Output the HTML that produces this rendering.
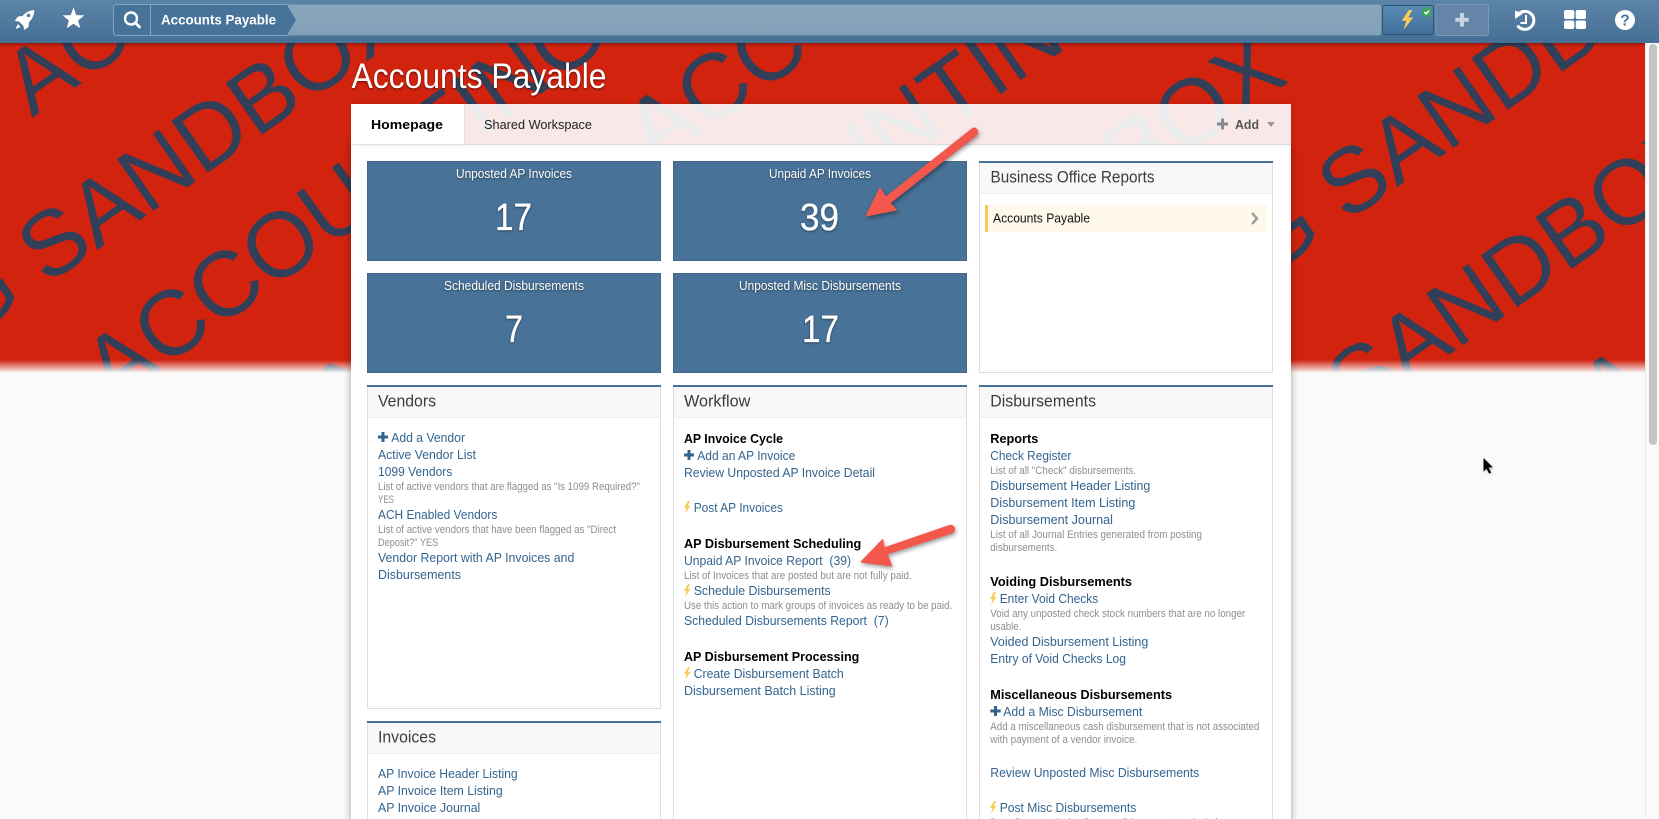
<!DOCTYPE html>
<html><head><meta charset="utf-8"><title>Accounts Payable</title>
<style>
html,body{margin:0;padding:0;width:1659px;height:819px;overflow:hidden;background:#fafafa}
svg{display:block;font-family:"Liberation Sans",Arial,sans-serif}
.wm{font-size:92px;fill:#323f58}
.l{font-size:13px;fill:#33648f}
.s{font-size:11px;fill:#8e8e8e}
.b{font-size:13px;font-weight:bold;fill:#000}
.h{font-size:17px;fill:#3c3c3c}
.st{font-size:13px;fill:#fff;filter:drop-shadow(0 1px 1px rgba(0,0,0,.45))}
.n{font-size:38px;fill:#fff;stroke:#fff;stroke-width:.35px;filter:drop-shadow(0 1px 1px rgba(0,0,0,.4))}
.card{fill:#487297;stroke:#3f688c;stroke-width:1}
.pn{fill:#fff;stroke:#ddd;stroke-width:1}
.ph{fill:#f8f8f8}
</style></head><body>
<svg width="1659" height="819" viewBox="0 0 1659 819" xmlns="http://www.w3.org/2000/svg">
<defs>
<linearGradient id="top" x1="0" y1="0" x2="0" y2="1"><stop offset="0" stop-color="#5c84a7"/><stop offset="1" stop-color="#456f94"/></linearGradient>
<linearGradient id="crumb" x1="0" y1="0" x2="0" y2="1"><stop offset="0" stop-color="#8ba6bc"/><stop offset="1" stop-color="#82a0b9"/></linearGradient>
<linearGradient id="fade" x1="0" y1="0" x2="0" y2="1"><stop offset="0" stop-color="#fafafa" stop-opacity="0"/><stop offset="1" stop-color="#fafafa"/></linearGradient>
<linearGradient id="sh" x1="0" y1="0" x2="0" y2="1"><stop offset="0" stop-color="#000" stop-opacity=".28"/><stop offset="1" stop-color="#000" stop-opacity="0"/></linearGradient>
<linearGradient id="btn" x1="0" y1="0" x2="0" y2="1"><stop offset="0" stop-color="#5a8cb6"/><stop offset="1" stop-color="#41709a"/></linearGradient>
<clipPath id="band"><rect x="0" y="43" width="1645" height="330"/></clipPath>
</defs>

<rect width="1659" height="819" fill="#fafafa"/>
<!-- red band with watermark -->
<g clip-path="url(#band)">
<rect x="0" y="43" width="1645" height="330" fill="#d2230f"/>
<text class="wm" transform="translate(32 118) rotate(-35)">ACCOUNTING SANDBOX</text>
<text class="wm" transform="translate(-481 655) rotate(-35)">ACCOUNTING SANDBOX ACCOUNTING</text>
<text class="wm" transform="translate(113 405) rotate(-36)">ACCOUNTING SANDBOX</text>
<text class="wm" transform="translate(352 425) rotate(-35)">N</text>
<text class="wm" transform="translate(654 167) rotate(-35)">ACCOUNTING</text>
<text class="wm" transform="translate(621 360) rotate(-35)">ACCOUNTING</text>
<text class="wm" transform="translate(922 339) rotate(-35)">SANDBOX</text>
<text class="wm" transform="translate(819 592) rotate(-35)">ACCOUNTING SANDBOX</text>
<text class="wm" transform="translate(1356 420) rotate(-35)">SANDBOX</text>
<text class="wm" transform="translate(1608 429) rotate(-35)">A</text>
<rect x="0" y="360" width="1645" height="13" fill="url(#fade)"/>
<rect x="0" y="43" width="1645" height="4" fill="url(#sh)"/>
</g>

<!-- scrollbar -->
<rect x="1645" y="43" width="14" height="776" fill="#fafafa"/>
<rect x="1645" y="43" width="1" height="776" fill="#e8e8e8"/>
<rect x="1649" y="44" width="8" height="401" rx="4" fill="#c4c4c4"/>

<!-- title -->
<text x="351.500" y="88" font-size="35" fill="#fff" textLength="255" lengthAdjust="spacingAndGlyphs" style="filter:drop-shadow(0 1px 1px rgba(0,0,0,.55))">Accounts Payable</text>

<!-- main panel -->
<rect x="351" y="144" width="940" height="700" fill="#fff" style="filter:drop-shadow(0 0 4px rgba(0,0,0,.35))"/>
<rect x="351" y="104" width="940" height="40" fill="#000" fill-opacity=".12" style="filter:blur(3px)"/>
<!-- watermark beneath the translucent tab bar -->
<svg x="351" y="104" width="940" height="40" viewBox="351 104 940 40">
<rect x="351" y="104" width="940" height="40" fill="#d2230f"/>
<text class="wm" transform="translate(-481 655) rotate(-35)">ACCOUNTING SANDBOX ACCOUNTING</text>
<text class="wm" transform="translate(113 405) rotate(-36)">ACCOUNTING SANDBOX</text>
<text class="wm" transform="translate(654 167) rotate(-35)">ACCOUNTING</text>
<text class="wm" transform="translate(621 360) rotate(-35)">ACCOUNTING</text>
<text class="wm" transform="translate(922 339) rotate(-35)">SANDBOX</text>
<text class="wm" transform="translate(819 592) rotate(-35)">ACCOUNTING SANDBOX</text>
</svg>
<rect x="351" y="104" width="940" height="40" fill="#fbfbfb" fill-opacity=".92"/>
<rect x="351" y="104" width="113" height="40" fill="#fff"/>
<rect x="464" y="104" width="1" height="40" fill="#e6dcdc"/>
<rect x="351" y="144" width="940" height="1" fill="#dcdcdc"/>
<rect x="351" y="144" width="113" height="1" fill="#e4e4e4"/>
<text class="b" x="371" y="129" font-size="14" textLength="72" lengthAdjust="spacingAndGlyphs">Homepage</text>
<text x="484" y="129" font-size="13" fill="#222" textLength="108" lengthAdjust="spacingAndGlyphs">Shared Workspace</text>
<path d="M1222.500 118.500v11M1217 124h11" stroke="#8a8a8a" stroke-width="3"/>
<text x="1235" y="129" font-size="13" font-weight="bold" fill="#555" textLength="24" lengthAdjust="spacingAndGlyphs">Add</text>
<path d="M1267 122h8l-4 5z" fill="#999"/>

<!-- stat cards -->
<rect class="card" x="367.500" y="161.500" width="293" height="99"/>
<rect class="card" x="673.500" y="161.500" width="293" height="99"/>
<rect class="card" x="367.500" y="273.500" width="293" height="99"/>
<rect class="card" x="673.500" y="273.500" width="293" height="99"/>
<text class="st" x="456" y="178" textLength="116" lengthAdjust="spacingAndGlyphs">Unposted AP Invoices</text>
<text class="st" x="769" y="178" textLength="102" lengthAdjust="spacingAndGlyphs">Unpaid AP Invoices</text>
<text class="st" x="444" y="290" textLength="140" lengthAdjust="spacingAndGlyphs">Scheduled Disbursements</text>
<text class="st" x="739" y="290" textLength="162" lengthAdjust="spacingAndGlyphs">Unposted Misc Disbursements</text>
<text class="n" x="495" y="230" textLength="37" lengthAdjust="spacingAndGlyphs">17</text>
<text class="n" x="800" y="230" textLength="39" lengthAdjust="spacingAndGlyphs">39</text>
<text class="n" x="505" y="342" textLength="18" lengthAdjust="spacingAndGlyphs">7</text>
<text class="n" x="802" y="342" textLength="37" lengthAdjust="spacingAndGlyphs">17</text>

<!-- business office panel -->
<rect class="pn" x="979.500" y="162" width="293" height="210.500"/>
<rect class="ph" x="980" y="163" width="292" height="30"/>
<rect x="980" y="193" width="292" height="1" fill="#eee"/>
<rect x="979" y="161" width="294" height="2" fill="#45719a"/>
<text class="h" x="990.500" y="182.700" textLength="164" lengthAdjust="spacingAndGlyphs">Business Office Reports</text>
<rect x="985" y="205" width="282" height="27" fill="#fff9ec"/>
<rect x="985" y="205" width="3" height="27" fill="#f7cb55"/>
<text x="993" y="222.700" font-size="13" fill="#111" textLength="97" lengthAdjust="spacingAndGlyphs">Accounts Payable</text>
<path d="M1252 213l5 5.500-5 5.500" fill="none" stroke="#999" stroke-width="2.400"/>

<!-- vendors -->
<rect class="pn" x="367.500" y="386" width="293" height="322.500"/>
<rect class="ph" x="368" y="387" width="292" height="30"/>
<rect x="368" y="417" width="292" height="1" fill="#eee"/>
<rect x="367" y="385" width="294" height="2" fill="#45719a"/>
<text class="h" x="378" y="406.700" textLength="58" lengthAdjust="spacingAndGlyphs">Vendors</text>
<path d="M383 432v10M378 437h10" stroke="#33648f" stroke-width="3"/>
<text class="l" x="391.300" y="442" textLength="73.700" lengthAdjust="spacingAndGlyphs">Add a Vendor</text>
<text class="l" x="378" y="459" textLength="98" lengthAdjust="spacingAndGlyphs">Active Vendor List</text>
<text class="l" x="378" y="476" textLength="74.300" lengthAdjust="spacingAndGlyphs">1099 Vendors</text>
<text class="s" x="378" y="490" textLength="262" lengthAdjust="spacingAndGlyphs">List of active vendors that are flagged as "Is 1099 Required?"</text>
<text class="s" x="378" y="503" textLength="16" lengthAdjust="spacingAndGlyphs">YES</text>
<text class="l" x="378" y="519" textLength="119.300" lengthAdjust="spacingAndGlyphs">ACH Enabled Vendors</text>
<text class="s" x="378" y="533" textLength="238" lengthAdjust="spacingAndGlyphs">List of active vendors that have been flagged as "Direct</text>
<text class="s" x="378" y="546" textLength="60.300" lengthAdjust="spacingAndGlyphs">Deposit?" YES</text>
<text class="l" x="378" y="562" textLength="196.300" lengthAdjust="spacingAndGlyphs">Vendor Report with AP Invoices and</text>
<text class="l" x="378" y="579" textLength="83" lengthAdjust="spacingAndGlyphs">Disbursements</text>

<!-- invoices -->
<rect class="pn" x="367.500" y="722" width="293" height="120"/>
<rect class="ph" x="368" y="723" width="292" height="30"/>
<rect x="368" y="753" width="292" height="1" fill="#eee"/>
<rect x="367" y="721" width="294" height="2" fill="#45719a"/>
<text class="h" x="378" y="742.700" textLength="58" lengthAdjust="spacingAndGlyphs">Invoices</text>
<text class="l" x="378" y="778" textLength="139.700" lengthAdjust="spacingAndGlyphs">AP Invoice Header Listing</text>
<text class="l" x="378" y="795" textLength="124.700" lengthAdjust="spacingAndGlyphs">AP Invoice Item Listing</text>
<text class="l" x="378" y="812" textLength="102.300" lengthAdjust="spacingAndGlyphs">AP Invoice Journal</text>

<!-- workflow -->
<rect class="pn" x="673.500" y="386" width="293" height="460"/>
<rect class="ph" x="674" y="387" width="292" height="30"/>
<rect x="674" y="417" width="292" height="1" fill="#eee"/>
<rect x="673" y="385" width="294" height="2" fill="#45719a"/>
<text class="h" x="684" y="406.700" textLength="66.300" lengthAdjust="spacingAndGlyphs">Workflow</text>
<text class="b" x="684" y="443" textLength="99" lengthAdjust="spacingAndGlyphs">AP Invoice Cycle</text>
<path d="M689 450v10M684 455h10" stroke="#33648f" stroke-width="3"/>
<text class="l" x="697.300" y="460" textLength="98" lengthAdjust="spacingAndGlyphs">Add an AP Invoice</text>
<text class="l" x="684" y="477" textLength="191" lengthAdjust="spacingAndGlyphs">Review Unposted AP Invoice Detail</text>
<path transform="translate(684 501)" d="M4 0L0 7H2.600L1 13 6.500 4.800H3.700L6 0Z" fill="#f7cb55"/>
<text class="l" x="693.700" y="512" textLength="89.300" lengthAdjust="spacingAndGlyphs">Post AP Invoices</text>
<text class="b" x="684" y="548" textLength="177.300" lengthAdjust="spacingAndGlyphs">AP Disbursement Scheduling</text>
<text class="l" x="684" y="565" textLength="167" lengthAdjust="spacingAndGlyphs" xml:space="preserve">Unpaid AP Invoice Report  (39)</text>
<text class="s" x="684" y="579" textLength="227.700" lengthAdjust="spacingAndGlyphs">List of Invoices that are posted but are not fully paid.</text>
<path transform="translate(684 584)" d="M4 0L0 7H2.600L1 13 6.500 4.800H3.700L6 0Z" fill="#f7cb55"/>
<text class="l" x="693.700" y="595" textLength="137" lengthAdjust="spacingAndGlyphs">Schedule Disbursements</text>
<text class="s" x="684" y="609" textLength="268.300" lengthAdjust="spacingAndGlyphs">Use this action to mark groups of invoices as ready to be paid.</text>
<text class="l" x="684" y="625" textLength="204.700" lengthAdjust="spacingAndGlyphs" xml:space="preserve">Scheduled Disbursements Report  (7)</text>
<text class="b" x="684" y="661" textLength="175.300" lengthAdjust="spacingAndGlyphs">AP Disbursement Processing</text>
<path transform="translate(684 667)" d="M4 0L0 7H2.600L1 13 6.500 4.800H3.700L6 0Z" fill="#f7cb55"/>
<text class="l" x="693.700" y="678" textLength="150" lengthAdjust="spacingAndGlyphs">Create Disbursement Batch</text>
<text class="l" x="684" y="695" textLength="151.700" lengthAdjust="spacingAndGlyphs">Disbursement Batch Listing</text>

<!-- disbursements -->
<rect class="pn" x="979.500" y="386" width="293" height="460"/>
<rect class="ph" x="980" y="387" width="292" height="30"/>
<rect x="980" y="417" width="292" height="1" fill="#eee"/>
<rect x="979" y="385" width="294" height="2" fill="#45719a"/>
<text class="h" x="990.300" y="406.700" textLength="105.700" lengthAdjust="spacingAndGlyphs">Disbursements</text>
<text class="b" x="990.300" y="443" textLength="48" lengthAdjust="spacingAndGlyphs">Reports</text>
<text class="l" x="990.300" y="460" textLength="81" lengthAdjust="spacingAndGlyphs">Check Register</text>
<text class="s" x="990.300" y="474" textLength="145.700" lengthAdjust="spacingAndGlyphs">List of all "Check" disbursements.</text>
<text class="l" x="990.300" y="490" textLength="160" lengthAdjust="spacingAndGlyphs">Disbursement Header Listing</text>
<text class="l" x="990.300" y="507" textLength="145" lengthAdjust="spacingAndGlyphs">Disbursement Item Listing</text>
<text class="l" x="990.300" y="524" textLength="122.700" lengthAdjust="spacingAndGlyphs">Disbursement Journal</text>
<text class="s" x="990.300" y="538" textLength="211.700" lengthAdjust="spacingAndGlyphs">List of all Journal Entries generated from posting</text>
<text class="s" x="990.300" y="551" textLength="67" lengthAdjust="spacingAndGlyphs">disbursements.</text>
<text class="b" x="990.300" y="586" textLength="141.700" lengthAdjust="spacingAndGlyphs">Voiding Disbursements</text>
<path transform="translate(990 592)" d="M4 0L0 7H2.600L1 13 6.500 4.800H3.700L6 0Z" fill="#f7cb55"/>
<text class="l" x="999.700" y="603" textLength="98.600" lengthAdjust="spacingAndGlyphs">Enter Void Checks</text>
<text class="s" x="990.300" y="617" textLength="255" lengthAdjust="spacingAndGlyphs">Void any unposted check stock numbers that are no longer</text>
<text class="s" x="990.300" y="630" textLength="31" lengthAdjust="spacingAndGlyphs">usable.</text>
<text class="l" x="990.300" y="646" textLength="158" lengthAdjust="spacingAndGlyphs">Voided Disbursement Listing</text>
<text class="l" x="990.300" y="663" textLength="135.700" lengthAdjust="spacingAndGlyphs">Entry of Void Checks Log</text>
<text class="b" x="990.300" y="699" textLength="181.700" lengthAdjust="spacingAndGlyphs">Miscellaneous Disbursements</text>
<path d="M995.500 706v10M990.300 711h10.400" stroke="#33648f" stroke-width="3"/>
<text class="l" x="1003.300" y="716" textLength="139" lengthAdjust="spacingAndGlyphs">Add a Misc Disbursement</text>
<text class="s" x="990.300" y="730" textLength="269" lengthAdjust="spacingAndGlyphs">Add a miscellaneous cash disbursement that is not associated</text>
<text class="s" x="990.300" y="743" textLength="147" lengthAdjust="spacingAndGlyphs">with payment of a vendor invoice.</text>
<text class="l" x="990.300" y="777" textLength="209" lengthAdjust="spacingAndGlyphs">Review Unposted Misc Disbursements</text>
<path transform="translate(990 801)" d="M4 0L0 7H2.600L1 13 6.500 4.800H3.700L6 0Z" fill="#f7cb55"/>
<text class="l" x="999.700" y="812" textLength="136.600" lengthAdjust="spacingAndGlyphs">Post Misc Disbursements</text>
<text class="s" x="990.300" y="826" textLength="240" lengthAdjust="spacingAndGlyphs">Post all unposted miscellaneous disbursements to the ledger</text>

<!-- annotation arrows -->
<g fill="#f4574b" stroke="#f4574b" stroke-width="1" stroke-linejoin="round" style="filter:drop-shadow(1px 2px 2px rgba(0,0,0,.4))">
<path d="M866 216L880 188 886 197 972.500 128.500Q975 127 977 130 978.500 133 976.500 135L890 203 896.500 210Z"/>
<path d="M861 562L882.700 539.500 884 548 949.500 525.500Q953 525 954.500 528 955 531.500 952 533L887 554 891.700 566Z"/>
</g>

<!-- cursor -->
<path d="M1483.500 458v13.500l3-3 2.500 5 2-1-2.500-5 4.200-.3z" fill="#000" style="filter:drop-shadow(1px 1px 1px rgba(0,0,0,.3))"/>

<!-- top bar -->
<rect x="0" y="0" width="1659" height="43" fill="url(#top)"/>
<path d="M34.300 10C29 10.500 25.500 12.500 22.500 16L18 16.500 14.700 21 19 21.500 23.500 26 24 30 28.500 27 29 22C32.500 19 34 15 34.300 10Z" fill="#fff"/>
<path d="M18 24L15.500 29 20.500 27Z" fill="#fff"/>
<circle cx="28.500" cy="15.500" r="1.700" fill="#4f799d"/>
<path d="M73.500 7.500L76.300 15.100 84.400 15.400 78.100 20.500 80.300 28.300 73.500 23.800 66.700 28.300 68.900 20.500 62.600 15.400 70.700 15.100Z" fill="#fff"/>

<rect x="113.500" y="4.500" width="1268" height="31" rx="3" fill="url(#crumb)"/>
<path d="M116 5H287L296 20 287 35H116Q114 35 114 33V7Q114 5 116 5Z" fill="#47729a"/>
<path d="M116.500 4.500H287M116.500 35.500H287M113.500 7.500V32.500Q113.500 35.500 116.500 35.500M113.500 7.500Q113.500 4.500 116.500 4.500M150.500 5V35" stroke="#86a4bd" stroke-width="1" fill="none"/>
<circle cx="131" cy="18.500" r="6" fill="none" stroke="#fff" stroke-width="2.400"/>
<path d="M135.500 23L139.500 27" stroke="#fff" stroke-width="2.800" stroke-linecap="round"/>
<text x="161" y="24.700" font-size="14" font-weight="bold" fill="#fff" textLength="115" lengthAdjust="spacingAndGlyphs">Accounts Payable</text>

<rect x="1382.500" y="5.500" width="51" height="29" rx="2" fill="url(#btn)" stroke="#2f5575"/>
<path transform="translate(1401.700 10) scale(1.780 1.540)" d="M4 0L0 7H2.600L1 13 6.500 4.800H3.700L6 0Z" fill="#f7cb55"/>
<circle cx="1426.700" cy="12" r="5" fill="#3fa45d"/>
<path d="M1424.300 12l1.800 1.800 3-3.200" stroke="#fff" stroke-width="1.500" fill="none"/>
<rect x="1436" y="4.500" width="52.500" height="31" rx="2" fill="#6485a7" stroke="#7e9ab5"/>
<path d="M1462 13v13.500M1455.300 19.700h13.400" stroke="#c8d3de" stroke-width="4"/>

<path d="M1518 14.500A9 9 0 1 1 1517.500 25.500" fill="none" stroke="#fff" stroke-width="3"/>
<path d="M1515 10.500L1523 13.500 1515 19Z" fill="#fff"/>
<path d="M1526 15v8h-5.500" fill="none" stroke="#fff" stroke-width="2"/>
<rect x="1564" y="10" width="10.300" height="9" rx="2" fill="#fff"/>
<rect x="1575.700" y="10" width="10.300" height="9" rx="2" fill="#fff"/>
<rect x="1564" y="20.500" width="10.300" height="8.500" rx="2" fill="#fff"/>
<rect x="1575.700" y="20.500" width="10.300" height="8.500" rx="2" fill="#fff"/>
<circle cx="1625" cy="20" r="10" fill="#fff"/>
<text x="1625" y="25.500" font-size="15.500" font-weight="bold" fill="#4b7599" text-anchor="middle">?</text>
</svg>
</body></html>
